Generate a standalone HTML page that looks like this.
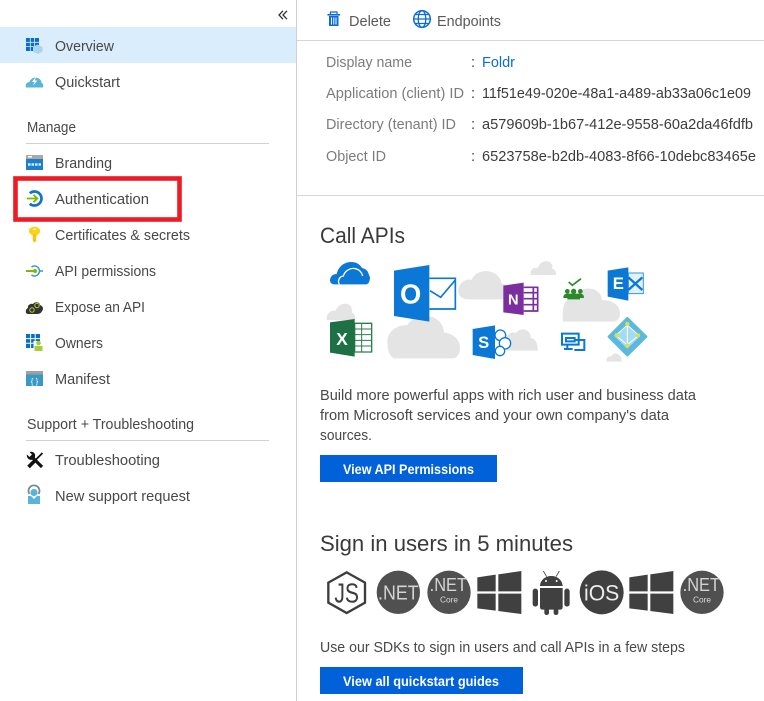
<!DOCTYPE html>
<html><head><meta charset="utf-8"><title>Foldr</title>
<style>
html,body{margin:0;padding:0;background:#fff;width:764px;height:701px;overflow:hidden}
svg{display:block}
text{font-family:"Liberation Sans",sans-serif;font-size:14.5px;fill:#484848}
.g{fill:#7c7c7c}.v{fill:#3c3c3c}
.cl{fill:#e4e4e4}
.b{fill:#0a78d4}
.soft{filter:blur(.35px)}
</style></head><body>
<svg width="764" height="701" viewBox="0 0 764 701" xmlns="http://www.w3.org/2000/svg">
<rect width="764" height="701" fill="#fff"/>
<rect x="0" y="27" width="296" height="36" fill="#d9edfc"/>
<rect x="296" y="0" width="1" height="701" fill="#d0d0d0"/>
<rect x="297" y="40" width="467" height="1" fill="#d6d6d6"/>
<rect x="297" y="195" width="467" height="1" fill="#d6d6d6"/>
<rect x="26" y="143" width="243" height="1" fill="#d2d2d2"/>
<rect x="26" y="440" width="243" height="1" fill="#d2d2d2"/>
<rect x="15.5" y="178.5" width="164" height="41" fill="none" stroke="#ed1c24" stroke-width="4.6"/>
<path d="M283 10.800l-4 4.200 4 4.200M287 10.800l-4 4.200 4 4.200" fill="none" stroke="#333" stroke-width="1.300"/>

<!-- sidebar text -->
<text x="55" y="51" textLength="59" lengthAdjust="spacingAndGlyphs">Overview</text>
<text x="55" y="87" textLength="65" lengthAdjust="spacingAndGlyphs">Quickstart</text>
<text x="27" y="132" textLength="49" lengthAdjust="spacingAndGlyphs">Manage</text>
<text x="55" y="168" textLength="57" lengthAdjust="spacingAndGlyphs">Branding</text>
<text x="55" y="204" textLength="94" lengthAdjust="spacingAndGlyphs">Authentication</text>
<text x="55" y="240" textLength="135" lengthAdjust="spacingAndGlyphs">Certificates &amp; secrets</text>
<text x="55" y="276" textLength="101" lengthAdjust="spacingAndGlyphs">API permissions</text>
<text x="55" y="312" textLength="90" lengthAdjust="spacingAndGlyphs">Expose an API</text>
<text x="55" y="348" textLength="48" lengthAdjust="spacingAndGlyphs">Owners</text>
<text x="55" y="384" textLength="55" lengthAdjust="spacingAndGlyphs">Manifest</text>
<text x="27" y="429" textLength="167" lengthAdjust="spacingAndGlyphs">Support + Troubleshooting</text>
<text x="55" y="465" textLength="105" lengthAdjust="spacingAndGlyphs">Troubleshooting</text>
<text x="55" y="501" textLength="135" lengthAdjust="spacingAndGlyphs">New support request</text>

<!-- sidebar icons -->
<g class="soft">
<path d="M26 38h13v13H26z" fill="#0a6cc4"/>
<path d="M30.300 38v13M34.600 38v13M26 42.300h13M26 46.600h13" stroke="#d9edfc" stroke-width=".8"/>
<path d="M33 47l4.500-2.500 5 2.500v4.500l-4.500 2.500-5-2.500z" fill="#a9d6ee"/>
<path d="M26 87.500c-1-3 1-5.500 3.500-5.500 1-3 4.500-5.500 8-4 3 1 4 3 4 5 2 .5 2 3 1.500 4.500z" fill="#59b4d9"/>
<path d="M36 76.500l-4 5.500h2.500l-1.500 3.500 4.500-5h-2.500z" fill="#fff"/>
<rect x="26" y="155" width="17" height="4" fill="#a8a8a8"/>
<rect x="26" y="159" width="17" height="11" fill="#1b7fce"/>
<rect x="28" y="156" width="4" height="1.500" fill="#fff"/>
<path d="M28 164.500h13" stroke="#cfe8f8" stroke-width="2.400" stroke-dasharray="2.600 .9"/>
<path d="M29.800 193.300a7 7 0 1 1 0 10.400" fill="none" stroke="#1273c7" stroke-width="2.700"/>
<path d="M26.800 198.500h10.500M33.500 194.800l3.800 3.700-3.800 3.700" fill="none" stroke="#7fba00" stroke-width="1.800"/>
<ellipse cx="34.500" cy="231" rx="5.600" ry="4.400" fill="#fcd116"/>
<path d="M32.800 234h3.900v2l-1 1 1 1-1 1 1 1-1.900 2.700-2-2z" fill="#f7c40f"/>
<rect x="32.800" y="228.500" width="3.500" height="1.400" fill="#fff2a8"/>
<path d="M26 271h9" stroke="#7fba00" stroke-width="2"/>
<circle cx="35" cy="271" r="2" fill="#7fba00"/>
<path d="M31.500 267a5 5 0 1 1 0 8M40 271h3" fill="none" stroke="#3999c6" stroke-width="1.500"/>
<path d="M28 314c-3 0-3-5 0-6-1-3 3-5 5-4 2-3 7-2 7 1 3 1 4 4 2 6-1 3-4 3-6 3z" fill="#333"/>
<circle cx="32" cy="310" r="2.200" fill="none" stroke="#b8d432" stroke-width="1"/>
<circle cx="37" cy="305.500" r="2.200" fill="none" stroke="#b8d432" stroke-width="1"/>
<path d="M26 334h14v14H26z" fill="#0a6cc4"/>
<path d="M30.600 334v14M35.200 334v14M26 338.600h14M26 343.200h14" stroke="#fff" stroke-width="1"/>
<rect x="33.500" y="341" width="9" height="10" fill="#fff"/>
<circle cx="38.500" cy="343" r="2.300" fill="#a6ce39"/>
<rect x="34.500" y="346" width="8" height="5" fill="#a6ce39"/>
<rect x="26" y="371" width="17" height="3.500" fill="#a0a0a0"/>
<rect x="26" y="374.500" width="17" height="11.500" fill="#3999c6"/>
<text x="34.500" y="384" text-anchor="middle" style="font-size:8px;fill:#fff">{ }</text>
<path d="M31 456l11 11" stroke="#111" stroke-width="3.200"/>
<path d="M27 454.500l2.500 2.500 2.500-2.500-2.500-2.500c3-1 6.500 1 5.500 5l-2 2.500c-4 1.500-7-2-6-5.500z" fill="#111"/>
<path d="M42.500 453l-7 7" stroke="#111" stroke-width="1.800"/>
<path d="M35.500 460l-7 7" stroke="#111" stroke-width="3.600"/>
<path d="M29.500 494a5.500 5.500 0 1 1 9 0" fill="none" stroke="#7f8b94" stroke-width="1.800"/>
<circle cx="34" cy="492.500" r="3.600" fill="#59b4d9"/>
<path d="M28 504v-8h3l3 3 3-3h3v8z" fill="#59b4d9"/>
</g>

<!-- toolbar -->
<rect x="327.500" y="14" width="12.500" height="1.600" fill="#0a6cd4"/>
<path d="M330.500 14v-2h6.500v2" fill="none" stroke="#0a6cd4" stroke-width="1.200"/>
<rect x="329" y="16" width="9.500" height="10" fill="#0a6cd4"/>
<path d="M331.500 17.500v7M333.800 17.500v7M336 17.500v7" stroke="#fff" stroke-width="1"/>
<text x="349" y="26" textLength="42" lengthAdjust="spacingAndGlyphs" style="fill:#5a5a5a">Delete</text>
<circle cx="422" cy="19" r="8.300" fill="none" stroke="#0a6cd4" stroke-width="1.500"/>
<ellipse cx="422" cy="19" rx="3.800" ry="8.300" fill="none" stroke="#0a6cd4" stroke-width="1.300"/>
<path d="M413.700 19h16.600M415.300 14.500h13.400M415.300 23.500h13.400" stroke="#0a6cd4" stroke-width="1.300"/>
<text x="437" y="26" textLength="64" lengthAdjust="spacingAndGlyphs" style="fill:#5a5a5a">Endpoints</text>

<!-- props -->
<text x="326" y="67" textLength="86" lengthAdjust="spacingAndGlyphs" class="g">Display name</text>
<text x="471" y="67" class="v">:</text>
<text x="482" y="67" textLength="33" lengthAdjust="spacingAndGlyphs" style="fill:#0a6cd4">Foldr</text>
<text x="326" y="98" textLength="138" lengthAdjust="spacingAndGlyphs" class="g">Application (client) ID</text>
<text x="471" y="98" class="v">:</text>
<text x="482" y="98" textLength="269" lengthAdjust="spacingAndGlyphs" class="v">11f51e49-020e-48a1-a489-ab33a06c1e09</text>
<text x="326" y="129" textLength="130" lengthAdjust="spacingAndGlyphs" class="g">Directory (tenant) ID</text>
<text x="471" y="129" class="v">:</text>
<text x="482" y="129" textLength="271" lengthAdjust="spacingAndGlyphs" class="v">a579609b-1b67-412e-9558-60a2da46fdfb</text>
<text x="326" y="161" textLength="60" lengthAdjust="spacingAndGlyphs" class="g">Object ID</text>
<text x="471" y="161" class="v">:</text>
<text x="482" y="161" textLength="274" lengthAdjust="spacingAndGlyphs" class="v">6523758e-b2db-4083-8f66-10debc83465e</text>

<!-- call APIs -->
<text x="320" y="243" textLength="85" lengthAdjust="spacingAndGlyphs" style="font-size:22px;fill:#3a3a3a">Call APIs</text>

<g transform="translate(310,250) scale(.33333)" class="soft">
<!-- clouds -->
<path class="cl" d="M445 125c0-25 20-40 40-35 8-22 35-32 60-24 20 6 28 22 30 36 18 2 27 16 25 46H475c-18 0-30-10-30-23z"/>
<path class="cl" d="M662 75c-4-14 8-24 22-22 4-16 24-26 38-15 6 6 6 14 4 18 10 2 13 10 12 19z"/>
<path class="cl" d="M760 215c-3-4-2-30 0-40 2-20 14-32 34-30 5-22 30-34 54-28 20 6 28 22 28 34 30-2 54 14 54 40 0 12-8 24-20 24z"/>
<path class="cl" d="M250 325c-14-10-18-30-18-50 0-28 25-50 60-50 15-25 50-35 80-22 20 10 30 28 30 45 28 2 48 22 48 46 0 14-8 31-20 31z"/>
<path class="cl" d="M50 210c-2-18 10-30 27-28 5-16 25-26 40-18 8 5 10 15 8 24 8 2 11 12 10 22z"/>
<path class="cl" d="M590 302v-40c6-14 18-18 28-12 8-14 28-16 38-4 6 8 6 14 6 18 12 0 22 14 21 38z"/>
<path class="cl" d="M890 335c-2-10 4-17 14-16 4-10 18-11 25-3 5 5 6 12 6 19z"/>
<!-- onedrive -->
<path class="b" d="M60 92c0-12 8-20 20-20 5-20 20-36 44-36 16 0 26 8 32 18 10 2 18 8 20 18l4 10c0 10-4 21-12 21H72c-6 0-12-5-12-11z"/>
<path d="M88 103c-6-10 0-24 12-25 4-14 20-26 36-22 12 2 20 12 22 22" fill="none" stroke="#fff" stroke-width="4"/>
<!-- outlook -->
<path fill="none" stroke="#0a78d4" stroke-width="5" d="M358 85h78v92h-78"/>
<path fill="none" stroke="#0a78d4" stroke-width="5" d="M360 122l32 20 44-52"/>
<path class="b" d="M252 62l106-17v170l-106-17z"/>
<text x="302" y="160" text-anchor="middle" style="font-size:82px;font-weight:bold;fill:#fff">O</text>
<!-- onenote -->
<path fill="none" stroke="#7b2f9e" stroke-width="5" d="M641 112h42v71h-42M641 128h42M641 146h42M641 164h42M670 112v71"/>
<path fill="#7b2f9e" d="M580 107l61-9v97l-61-8z"/>
<text x="610" y="163" text-anchor="middle" style="font-size:44px;font-weight:bold;fill:#fff">N</text>
<!-- group check -->
<path fill="none" stroke="#2a8a2a" stroke-width="5" d="M776 96l11 10 26-20"/>
<circle cx="772" cy="124" r="7" fill="#2a8a2a"/><circle cx="791" cy="124" r="8" fill="#2a8a2a"/><circle cx="811" cy="124" r="7" fill="#2a8a2a"/>
<path fill="#2a8a2a" d="M760 144c0-10 5-13 12-13h38c7 0 12 3 12 13h-12v4h-38v-4z"/>
<!-- exchange -->
<path fill="#e3f1fb" stroke="#3a96de" stroke-width="3" d="M955 69h45v62h-45z"/>
<path fill="none" stroke="#0a78d4" stroke-width="7" d="M955 82l42 38M997 82l-42 38"/>
<path class="b" d="M893 62l62-10v100l-62-12z"/>
<text x="925" y="117" text-anchor="middle" style="font-size:50px;font-weight:bold;fill:#fff">E</text>
<!-- excel -->
<path fill="#fff" stroke="#2b7d4f" stroke-width="4" d="M134 220h51v86h-51z"/>
<path fill="none" stroke="#2b7d4f" stroke-width="3" d="M134 237h51M134 254h51M134 271h51M134 288h51M155 220v86"/>
<path fill="#1e7145" d="M60 217l74-10v113l-74-12z"/>
<text x="96" y="285" text-anchor="middle" style="font-size:52px;font-weight:bold;fill:#fff">X</text>
<!-- sharepoint -->
<circle cx="571" cy="256" r="16" fill="#fff" stroke="#0a78d4" stroke-width="4"/>
<circle cx="585" cy="280" r="17" fill="#fff" stroke="#0a78d4" stroke-width="4"/>
<circle cx="570" cy="303" r="14" fill="#fff" stroke="#0a78d4" stroke-width="4"/>
<path class="b" d="M488 237l67-11v101l-67-12z"/>
<text x="521" y="294" text-anchor="middle" style="font-size:50px;font-weight:bold;fill:#fff">S</text>
<!-- remote -->
<path fill="none" stroke="#0a78d4" stroke-width="6" d="M756 251h50v33h-50zM772 286v10M762 297h26M768 264h26v10h-26zM795 270h28v30h-30"/>
<!-- AAD -->
<path fill="#5cb8de" stroke="#5cb8de" stroke-width="8" stroke-linejoin="round" d="M952 205l56 55-56 55-55-55z"/>
<path fill="#a5dbef" d="M952 225l36 36-36 35-36-35z"/>
<path fill="none" stroke="#fff" stroke-width="3" d="M952 225v60M952 285l-34-29M952 285l34-29M952 225l-34 31M952 225l34 31"/>
<circle cx="952" cy="222" r="6.500" fill="#d7e34b"/><circle cx="920" cy="256" r="6.500" fill="#d7e34b"/><circle cx="984" cy="256" r="6.500" fill="#d7e34b"/><circle cx="952" cy="287" r="6.500" fill="#d7e34b"/>
</g>

<text x="320" y="400" textLength="376" lengthAdjust="spacingAndGlyphs">Build more powerful apps with rich user and business data</text>
<text x="320" y="420" textLength="349" lengthAdjust="spacingAndGlyphs">from Microsoft services and your own company's data</text>
<text x="320" y="440" textLength="52" lengthAdjust="spacingAndGlyphs">sources.</text>
<rect x="320" y="455" width="177" height="27" fill="#0061d9"/>
<text x="343" y="474" textLength="131" lengthAdjust="spacingAndGlyphs" style="font-weight:bold;font-size:13.5px;fill:#fff">View API Permissions</text>

<text x="320" y="551" textLength="253" lengthAdjust="spacingAndGlyphs" style="font-size:22px;fill:#3a3a3a">Sign in users in 5 minutes</text>

<g transform="translate(310,560) scale(.33333)" class="soft">
<path fill="none" stroke="#3d3d3d" stroke-width="7" d="M110 37l55 31v60l-55 31-55-31V68z"/>
<text x="110" y="128" text-anchor="middle" textLength="74" lengthAdjust="spacingAndGlyphs" style="font-size:84px;fill:#3d3d3d">JS</text>
<circle cx="265" cy="97" r="65" fill="#505050"/>
<text x="265" y="118" text-anchor="middle" textLength="122" lengthAdjust="spacingAndGlyphs" style="font-size:60px;fill:#d4d4d4">.NET</text>
<circle cx="417" cy="97" r="65" fill="#505050"/>
<text x="415" y="93" text-anchor="middle" textLength="112" lengthAdjust="spacingAndGlyphs" style="font-size:55px;fill:#d4d4d4">.NET</text>
<text x="417" y="127" text-anchor="middle" style="font-size:25px;fill:#dcdcdc">Core</text>
<path fill="#404040" d="M502 52l55-8v50h-55zM565 43l69-10v61h-69zM502 101h55v51l-55-7zM565 101h69v61l-69-9z"/>
<path fill="#404040" d="M690 78c1-18 16-30 34-30s33 12 34 30zM690 84h68v58c0 4-3 7-7 7h-6v10c0 8-14 8-14 0v-10h-14v10c0 8-14 8-14 0v-10h-6c-4 0-7-3-7-7zM676 86c4 0 8 3 8 8v38c0 10-16 10-16 0V94c0-5 4-8 8-8zM771 86c4 0 8 3 8 8v38c0 10-16 10-16 0V94c0-5 4-8 8-8z"/>
<path stroke="#404040" stroke-width="2.500" d="M700 33l10 17M748 33l-10 17"/>
<circle cx="708" cy="63" r="3" fill="#fff"/><circle cx="740" cy="63" r="3" fill="#fff"/>
<circle cx="875" cy="97" r="66" fill="#404040"/>
<text x="875" y="121" text-anchor="middle" textLength="106" lengthAdjust="spacingAndGlyphs" style="font-size:66px;fill:#ececec">iOS</text>
<path fill="#404040" transform="translate(456,0)" d="M502 52l55-8v50h-55zM565 43l69-10v61h-69zM502 101h55v51l-55-7zM565 101h69v61l-69-9z"/>
<circle cx="1176" cy="97" r="65" fill="#505050"/>
<text x="1174" y="93" text-anchor="middle" textLength="112" lengthAdjust="spacingAndGlyphs" style="font-size:55px;fill:#d4d4d4">.NET</text>
<text x="1176" y="127" text-anchor="middle" style="font-size:25px;fill:#dcdcdc">Core</text>
</g>

<text x="320" y="652" textLength="365" lengthAdjust="spacingAndGlyphs">Use our SDKs to sign in users and call APIs in a few steps</text>
<rect x="320" y="667" width="203" height="27" fill="#0061d9"/>
<text x="343" y="686" textLength="156" lengthAdjust="spacingAndGlyphs" style="font-weight:bold;font-size:13.5px;fill:#fff">View all quickstart guides</text>
</svg>
</body></html>
